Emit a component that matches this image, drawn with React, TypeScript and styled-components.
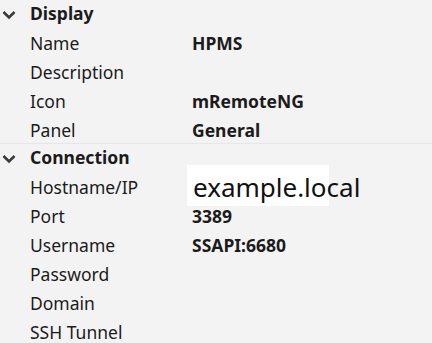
import React from "react";
import styled, { createGlobalStyle } from "styled-components";

const GlobalStyle = createGlobalStyle`
  html, body {
    margin: 0;
    padding: 0;
    background: #f3f3f3;
  }
  body {
    font-family: "Noto Sans", "Open Sans", sans-serif;
    color: #1b1b1b;
  }
`;

type Prop = { label: string; value?: string; editing?: boolean };

const sections: { title: string; props: Prop[] }[] = [
  {
    title: "Display",
    props: [
      { label: "Name", value: "HPMS" },
      { label: "Description" },
      { label: "Icon", value: "mRemoteNG" },
      { label: "Panel", value: "General" },
    ],
  },
  {
    title: "Connection",
    props: [
      { label: "Hostname/IP", value: "example.local", editing: true },
      { label: "Port", value: "3389" },
      { label: "Username", value: "SSAPI:6680" },
      { label: "Password" },
      { label: "Domain" },
      { label: "SSH Tunnel" },
    ],
  },
];

const Chevron = () => (
  <svg width="14" height="10" viewBox="0 0 14 10">
    <polyline
      points="1.5,2 7,7.5 12.5,2"
      fill="none"
      stroke="#3a3a3a"
      strokeWidth="2.6"
    />
  </svg>
);

export default function App() {
  return (
    <>
      <GlobalStyle />
      <Grid>
        {sections.map((s, i) => (
          <Section key={s.title} $first={i === 0}>
            <Header>
              <Toggle>
                <Chevron />
              </Toggle>
              <Title>{s.title}</Title>
            </Header>
            {s.props.map((p) => (
              <Row key={p.label}>
                <Label>{p.label}</Label>
                {p.editing ? (
                  <Cell>
                    <Editor>{p.value}</Editor>
                  </Cell>
                ) : (
                  <Value>{p.value}</Value>
                )}
              </Row>
            ))}
          </Section>
        ))}
      </Grid>
    </>
  );
}

const Grid = styled.div`
  width: 432px;
  height: 343px;
  overflow: hidden;
  background: #f3f3f3;
`;

const Section = styled.div<{ $first?: boolean }>`
  border-top: ${(p) => (p.$first ? "none" : "1px solid #e6e6e6")};
  margin-top: ${(p) => (p.$first ? "0" : "-2px")};
`;

const Header = styled.div`
  height: 29px;
  display: flex;
  align-items: center;
`;

const Toggle = styled.div`
  width: 30px;
  display: flex;
  align-items: center;
  padding-left: 2px;
  padding-top: 1px;
  box-sizing: border-box;
`;

const Title = styled.div`
  font-size: 17.5px;
  font-weight: 700;
  padding-bottom: 3px;
`;

const Row = styled.div`
  height: 29px;
  display: grid;
  grid-template-columns: 162px 1fr;
  grid-template-rows: 29px;
  align-items: center;
  padding-left: 30px;
`;

const Label = styled.div`
  font-size: 17.5px;
  white-space: nowrap;
  padding-bottom: 2px;
`;

const Value = styled.div`
  font-size: 17.5px;
  font-weight: 700;
  white-space: nowrap;
  padding-bottom: 2px;
`;

const Cell = styled.div`
  position: relative;
  height: 29px;
`;

const Editor = styled.div`
  position: absolute;
  left: -5px;
  top: -8px;
  width: 142px;
  height: 41px;
  background: #fff;
  box-sizing: border-box;
  padding: 3px 0 0 6px;
  font-size: 26px;
  line-height: 38px;
  white-space: nowrap;
  color: #111;
`;
